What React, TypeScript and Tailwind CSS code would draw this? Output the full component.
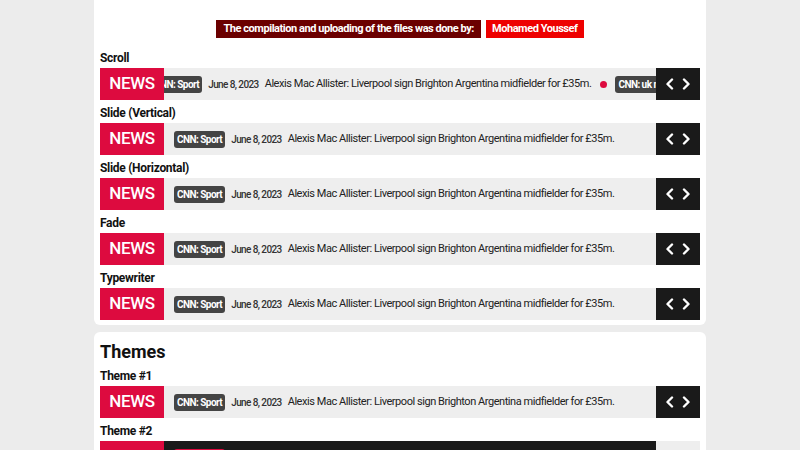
import { ReactNode } from 'react';

const HEADLINE = 'Alexis Mac Allister: Liverpool sign Brighton Argentina midfielder for £35m.';

function Chevrons({ dark }: { dark?: boolean }) {
  const c = dark ? '#1a1a1a' : '#ffffff';
  return (
    <div className="flex items-center gap-[6px]">
      <svg width="10" height="12" viewBox="0 0 10 12">
        <path d="M7 1.5 L2.5 6 L7 10.5" fill="none" stroke={c} strokeWidth="2.4" strokeLinecap="round" strokeLinejoin="round" />
      </svg>
      <svg width="10" height="12" viewBox="0 0 10 12">
        <path d="M3 1.5 L7.5 6 L3 10.5" fill="none" stroke={c} strokeWidth="2.4" strokeLinecap="round" strokeLinejoin="round" />
      </svg>
    </div>
  );
}

function Tag({ children, red }: { children: ReactNode; red?: boolean }) {
  return (
    <span
      className={`shrink-0 rounded-[3px] px-[3px] h-[17px] flex items-center text-[10px] font-bold tracking-[-0.55px] text-white whitespace-nowrap ${red ? 'bg-[#dd0b3f]' : 'bg-[#444444]'}`}
    >
      {children}
    </span>
  );
}

function Item({ tag = 'CNN: Sport', dark }: { tag?: string; dark?: boolean }) {
  return (
    <div className="flex items-center shrink-0 whitespace-nowrap">
      <Tag red={dark}>{tag}</Tag>
      <span className={`ml-[6px] text-[10px] font-medium tracking-[-0.6px] ${dark ? 'text-white' : 'text-[#333]'}`}>
        June 8, 2023
      </span>
      <span className={`ml-[6px] text-[11px] tracking-[-0.45px] ${dark ? 'text-white' : 'text-[#222]'}`}>{HEADLINE}</span>
    </div>
  );
}

function Ticker({ scroll, dark }: { scroll?: boolean; dark?: boolean }) {
  return (
    <div className="flex h-8">
      <div className="w-16 shrink-0 bg-[#dd0b3f] flex items-center justify-center text-white text-[17px] font-medium tracking-[-0.4px]">
        NEWS
      </div>
      <div className={`flex-1 overflow-hidden flex items-center ${dark ? 'bg-[#1a1a1a]' : 'bg-[#eeeeee]'}`}>
        {scroll ? (
          <div className="flex items-center -ml-[13px]">
            <Item />
            <span className="ml-[9px] mr-[8px] w-[7px] h-[7px] rounded-full bg-[#dd0b3f] shrink-0" />
            <Tag>CNN: uk news</Tag>
          </div>
        ) : (
          <div className="pl-[10px] flex items-center">
            <Item dark={dark} />
          </div>
        )}
      </div>
      <div className={`w-11 shrink-0 flex items-center justify-center ${dark ? 'bg-[#eeeeee]' : 'bg-[#1a1a1a]'}`}>
        <Chevrons dark={dark} />
      </div>
    </div>
  );
}

function Label({ children }: { children: ReactNode }) {
  return (
    <div className="pt-[5px] pb-[2px] leading-4 text-[12px] font-bold tracking-[-0.3px] text-[#111]">{children}</div>
  );
}

export default function App() {
  return (
    <div className="min-h-[450px] bg-[#ececec] font-['Roboto',sans-serif] overflow-hidden">
      <div className="w-[612px] mx-auto flex flex-col gap-[7px]">
        <div className="bg-white rounded-b-md px-[6px] pt-5 pb-[5px]">
          <div className="flex justify-center gap-[5px] h-[18px] mb-[7px]">
            <div className="bg-[#6b0000] px-[7px] flex items-center text-white text-[11px] font-bold tracking-[-0.45px]">
              The compilation and uploading of the files was done by:
            </div>
            <div className="bg-[#ee0000] px-[6px] flex items-center text-white text-[11px] font-bold tracking-[-0.45px]">
              Mohamed Youssef
            </div>
          </div>
          <Label>Scroll</Label>
          <Ticker scroll />
          <Label>Slide (Vertical)</Label>
          <Ticker />
          <Label>Slide (Horizontal)</Label>
          <Ticker />
          <Label>Fade</Label>
          <Ticker />
          <Label>Typewriter</Label>
          <Ticker />
        </div>
        <div className="bg-white rounded-md px-[6px] pt-[9px] pb-[6px]">
          <div className="text-[18px] leading-[22px] font-bold text-[#111]">Themes</div>
          <Label>Theme #1</Label>
          <Ticker />
          <Label>Theme #2</Label>
          <Ticker dark />
        </div>
      </div>
    </div>
  );
}
